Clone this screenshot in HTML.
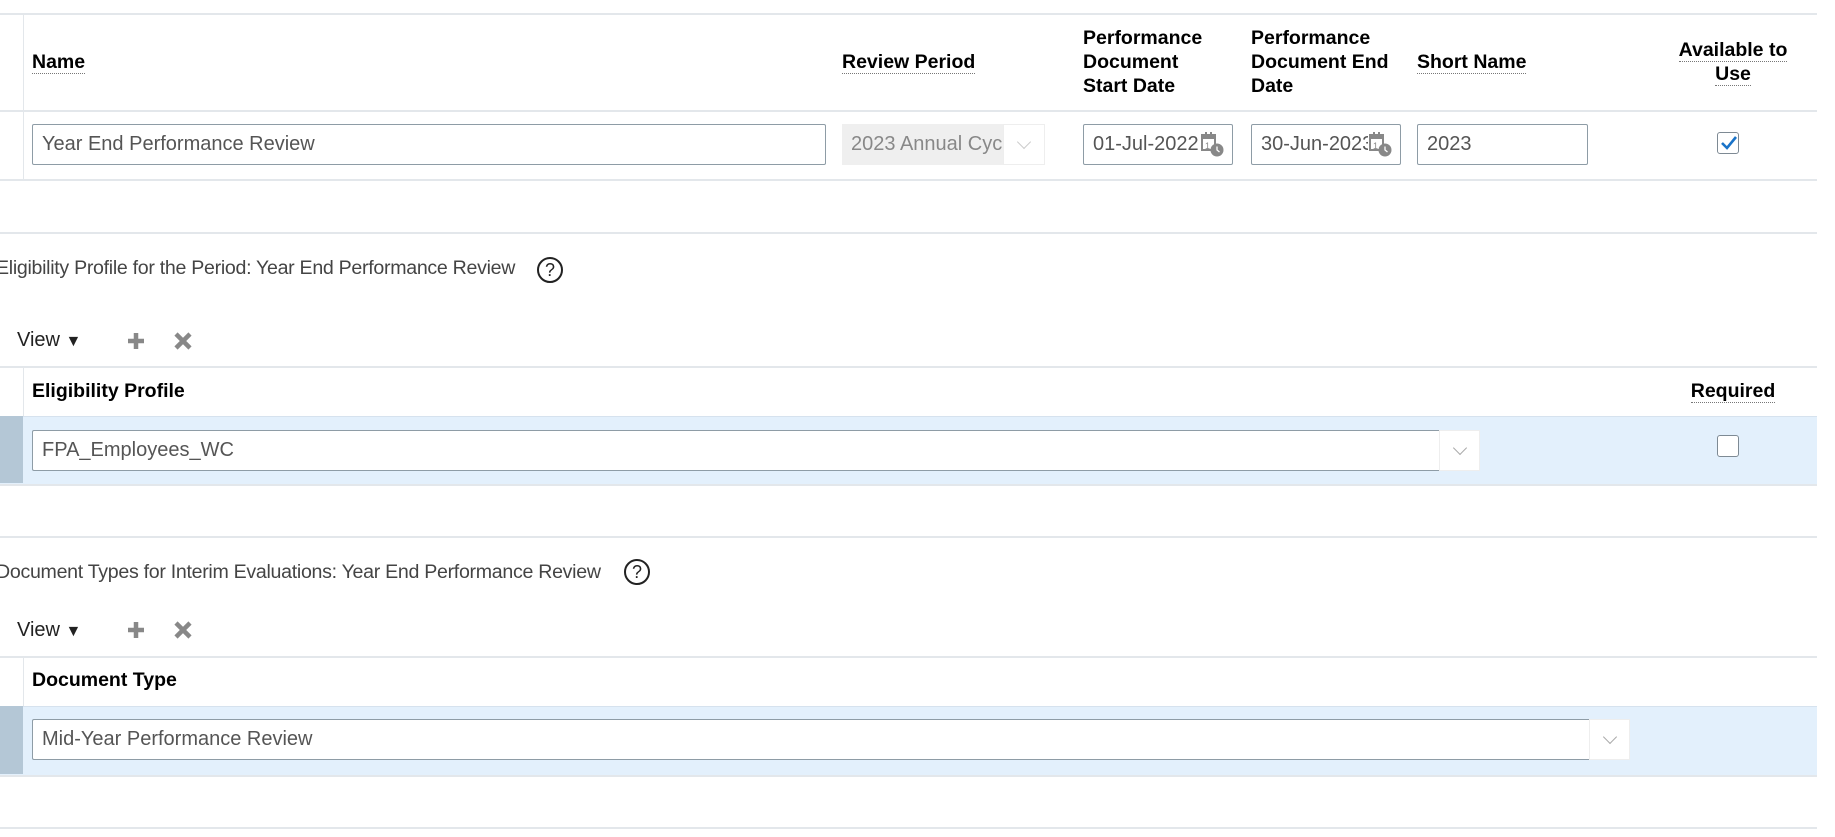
<!DOCTYPE html>
<html><head><meta charset="utf-8"><style>
body{margin:0;width:1835px;height:837px;background:#fff;position:relative;overflow:hidden;font-family:"Liberation Sans",Arial,sans-serif;}
.a{position:absolute}
.hl{position:absolute;left:0;width:1817px;height:2px;background:#e3e7eb}
.th{position:absolute;font-weight:bold;font-size:19.5px;color:#000;line-height:24px}
.u{border-bottom:1px dotted #777;}
.in{position:absolute;box-sizing:border-box;border:1px solid #8e9ca6;border-radius:2px;background:#fff;font-size:20px;color:#555;padding-left:9px;display:flex;align-items:center;overflow:hidden;white-space:nowrap}
.tt{position:absolute;font-size:19.6px;color:#444;white-space:nowrap;letter-spacing:-0.3px}
.help{position:absolute;width:22px;height:22px;border:2px solid #222;border-radius:50%;font-size:18px;text-align:center;line-height:22px;color:#222}
.view{position:absolute;left:17px;font-size:20px;color:#222}
.cb{position:absolute;width:22px;height:22px;box-sizing:border-box;border:1.5px solid #7e8a94;border-radius:3px;background:#fff}
.chev{position:absolute;width:9px;height:9px;border-right:1.5px solid #999;border-bottom:1.5px solid #999;transform:rotate(45deg)}
</style></head><body>
<div class="hl" style="top:13px"></div>
<div class="a" style="left:23px;top:14px;width:1px;height:166px;background:#e3e7eb"></div>
<div class="th" style="left:32px;top:50px"><span class="u">Name</span></div>
<div class="th" style="left:842px;top:50px"><span class="u">Review Period</span></div>
<div class="th" style="left:1083px;top:26px">Performance<br>Document<br>Start Date</div>
<div class="th" style="left:1251px;top:26px">Performance<br>Document End<br>Date</div>
<div class="th" style="left:1417px;top:50px"><span class="u">Short Name</span></div>
<div class="th" style="left:1660px;top:38px;width:146px;text-align:center"><span class="u">Available to</span><br><span class="u">Use</span></div>
<div class="hl" style="top:110px"></div>
<div class="in" style="left:32px;top:124px;width:794px;height:41px">Year End Performance Review</div>
<div class="a" style="left:842px;top:124px;width:203px;height:41px;background:#efefef;font-size:20px;color:#888;line-height:41px;padding-left:9px;box-sizing:border-box;overflow:hidden;white-space:nowrap">2023 Annual Cycle</div>
<div class="a" style="left:1003px;top:124px;width:42px;height:41px;background:#fff;border:1px solid #eee;box-sizing:border-box"></div>
<div class="chev" style="left:1019px;top:137px;border-color:#ccc"></div>
<div class="in" style="left:1083px;top:124px;width:150px;height:41px">01-Jul-2022</div>
<div class="in" style="left:1251px;top:124px;width:150px;height:41px">30-Jun-2023</div>
<svg class="a" style="left:1200px;top:131px" width="30" height="30" viewBox="0 0 30 30"><rect x="0" y="0" width="24" height="30" fill="#fff"/><rect x="2" y="4" width="13" height="15" fill="none" stroke="#888" stroke-width="2"/><rect x="2" y="4" width="13" height="4" fill="#888"/><rect x="5" y="1" width="2" height="4" fill="#888"/><rect x="10" y="1" width="2" height="4" fill="#888"/><text x="5" y="18" font-size="9" fill="#888" font-family="Liberation Sans">1</text><circle cx="17" cy="19" r="6.5" fill="#888"/><path d="M17 15.5v3.5l2.5 2" stroke="#fff" stroke-width="1.3" fill="none"/></svg>
<svg class="a" style="left:1368px;top:131px" width="30" height="30" viewBox="0 0 30 30"><rect x="0" y="0" width="24" height="30" fill="#fff"/><rect x="2" y="4" width="13" height="15" fill="none" stroke="#888" stroke-width="2"/><rect x="2" y="4" width="13" height="4" fill="#888"/><rect x="5" y="1" width="2" height="4" fill="#888"/><rect x="10" y="1" width="2" height="4" fill="#888"/><text x="5" y="18" font-size="9" fill="#888" font-family="Liberation Sans">1</text><circle cx="17" cy="19" r="6.5" fill="#888"/><path d="M17 15.5v3.5l2.5 2" stroke="#fff" stroke-width="1.3" fill="none"/></svg>
<div class="in" style="left:1417px;top:124px;width:171px;height:41px">2023</div>
<div class="cb" style="left:1717px;top:132px"></div>
<svg class="a" style="left:1719px;top:133px" width="20" height="20"><path d="M3 10l5 5 9-11" stroke="#1a73c8" stroke-width="2.6" fill="none"/></svg>
<div class="hl" style="top:179px"></div>
<div class="hl" style="top:232px"></div>

<div class="tt" style="left:-4px;top:257px">Eligibility Profile for the Period: Year End Performance Review</div>
<div class="help" style="left:537px;top:257px">?</div>
<div class="view" style="top:329px">View <span style="font-size:16px">▼</span></div>
<svg class="a" style="left:126px;top:331px" width="20" height="20"><path d="M10 2v16M2 10h16" stroke="#888" stroke-width="4.5"/></svg>
<svg class="a" style="left:173px;top:331px" width="20" height="20"><path d="M3 3l14 14M17 3L3 17" stroke="#888" stroke-width="4.5"/></svg>
<div class="hl" style="top:366px"></div>
<div class="a" style="left:23px;top:367px;width:1px;height:50px;background:#e3e7eb"></div>
<div class="th" style="left:32px;top:379px">Eligibility Profile</div>
<div class="th" style="left:1660px;top:379px;width:146px;text-align:center"><span class="u">Required</span></div>
<div class="a" style="left:0;top:416px;width:1817px;height:67px;background:#e3f0fc;border-top:1px solid #d6e2ee"></div>
<div class="a" style="left:0;top:416px;width:23px;height:67px;background:#b4c7d6"></div>
<div class="in" style="left:32px;top:430px;width:1447px;height:41px;border-right:none">FPA_Employees_WC</div>
<div class="a" style="left:1439px;top:430px;width:41px;height:41px;background:#fff;border:1px solid #eee;box-sizing:border-box"></div>
<div class="chev" style="left:1455px;top:443px;border-color:#aaa"></div>
<div class="cb" style="left:1717px;top:435px"></div>
<div class="hl" style="top:484px"></div>
<div class="hl" style="top:536px"></div>

<div class="tt" style="left:-4px;top:561px">Document Types for Interim Evaluations: Year End Performance Review</div>
<div class="help" style="left:624px;top:559px">?</div>
<div class="view" style="top:619px">View <span style="font-size:16px">▼</span></div>
<svg class="a" style="left:126px;top:620px" width="20" height="20"><path d="M10 2v16M2 10h16" stroke="#888" stroke-width="4.5"/></svg>
<svg class="a" style="left:173px;top:620px" width="20" height="20"><path d="M3 3l14 14M17 3L3 17" stroke="#888" stroke-width="4.5"/></svg>
<div class="hl" style="top:656px"></div>
<div class="a" style="left:23px;top:657px;width:1px;height:50px;background:#e3e7eb"></div>
<div class="th" style="left:32px;top:668px">Document Type</div>
<div class="a" style="left:0;top:706px;width:1817px;height:68px;background:#e3f0fc;border-top:1px solid #d6e2ee"></div>
<div class="a" style="left:0;top:706px;width:23px;height:68px;background:#b4c7d6"></div>
<div class="in" style="left:32px;top:719px;width:1598px;height:41px;border-right:none">Mid-Year Performance Review</div>
<div class="a" style="left:1589px;top:719px;width:41px;height:41px;background:#fff;border:1px solid #eee;box-sizing:border-box"></div>
<div class="chev" style="left:1605px;top:732px;border-color:#aaa"></div>
<div class="hl" style="top:775px"></div>
<div class="hl" style="top:827px"></div>
</body></html>
